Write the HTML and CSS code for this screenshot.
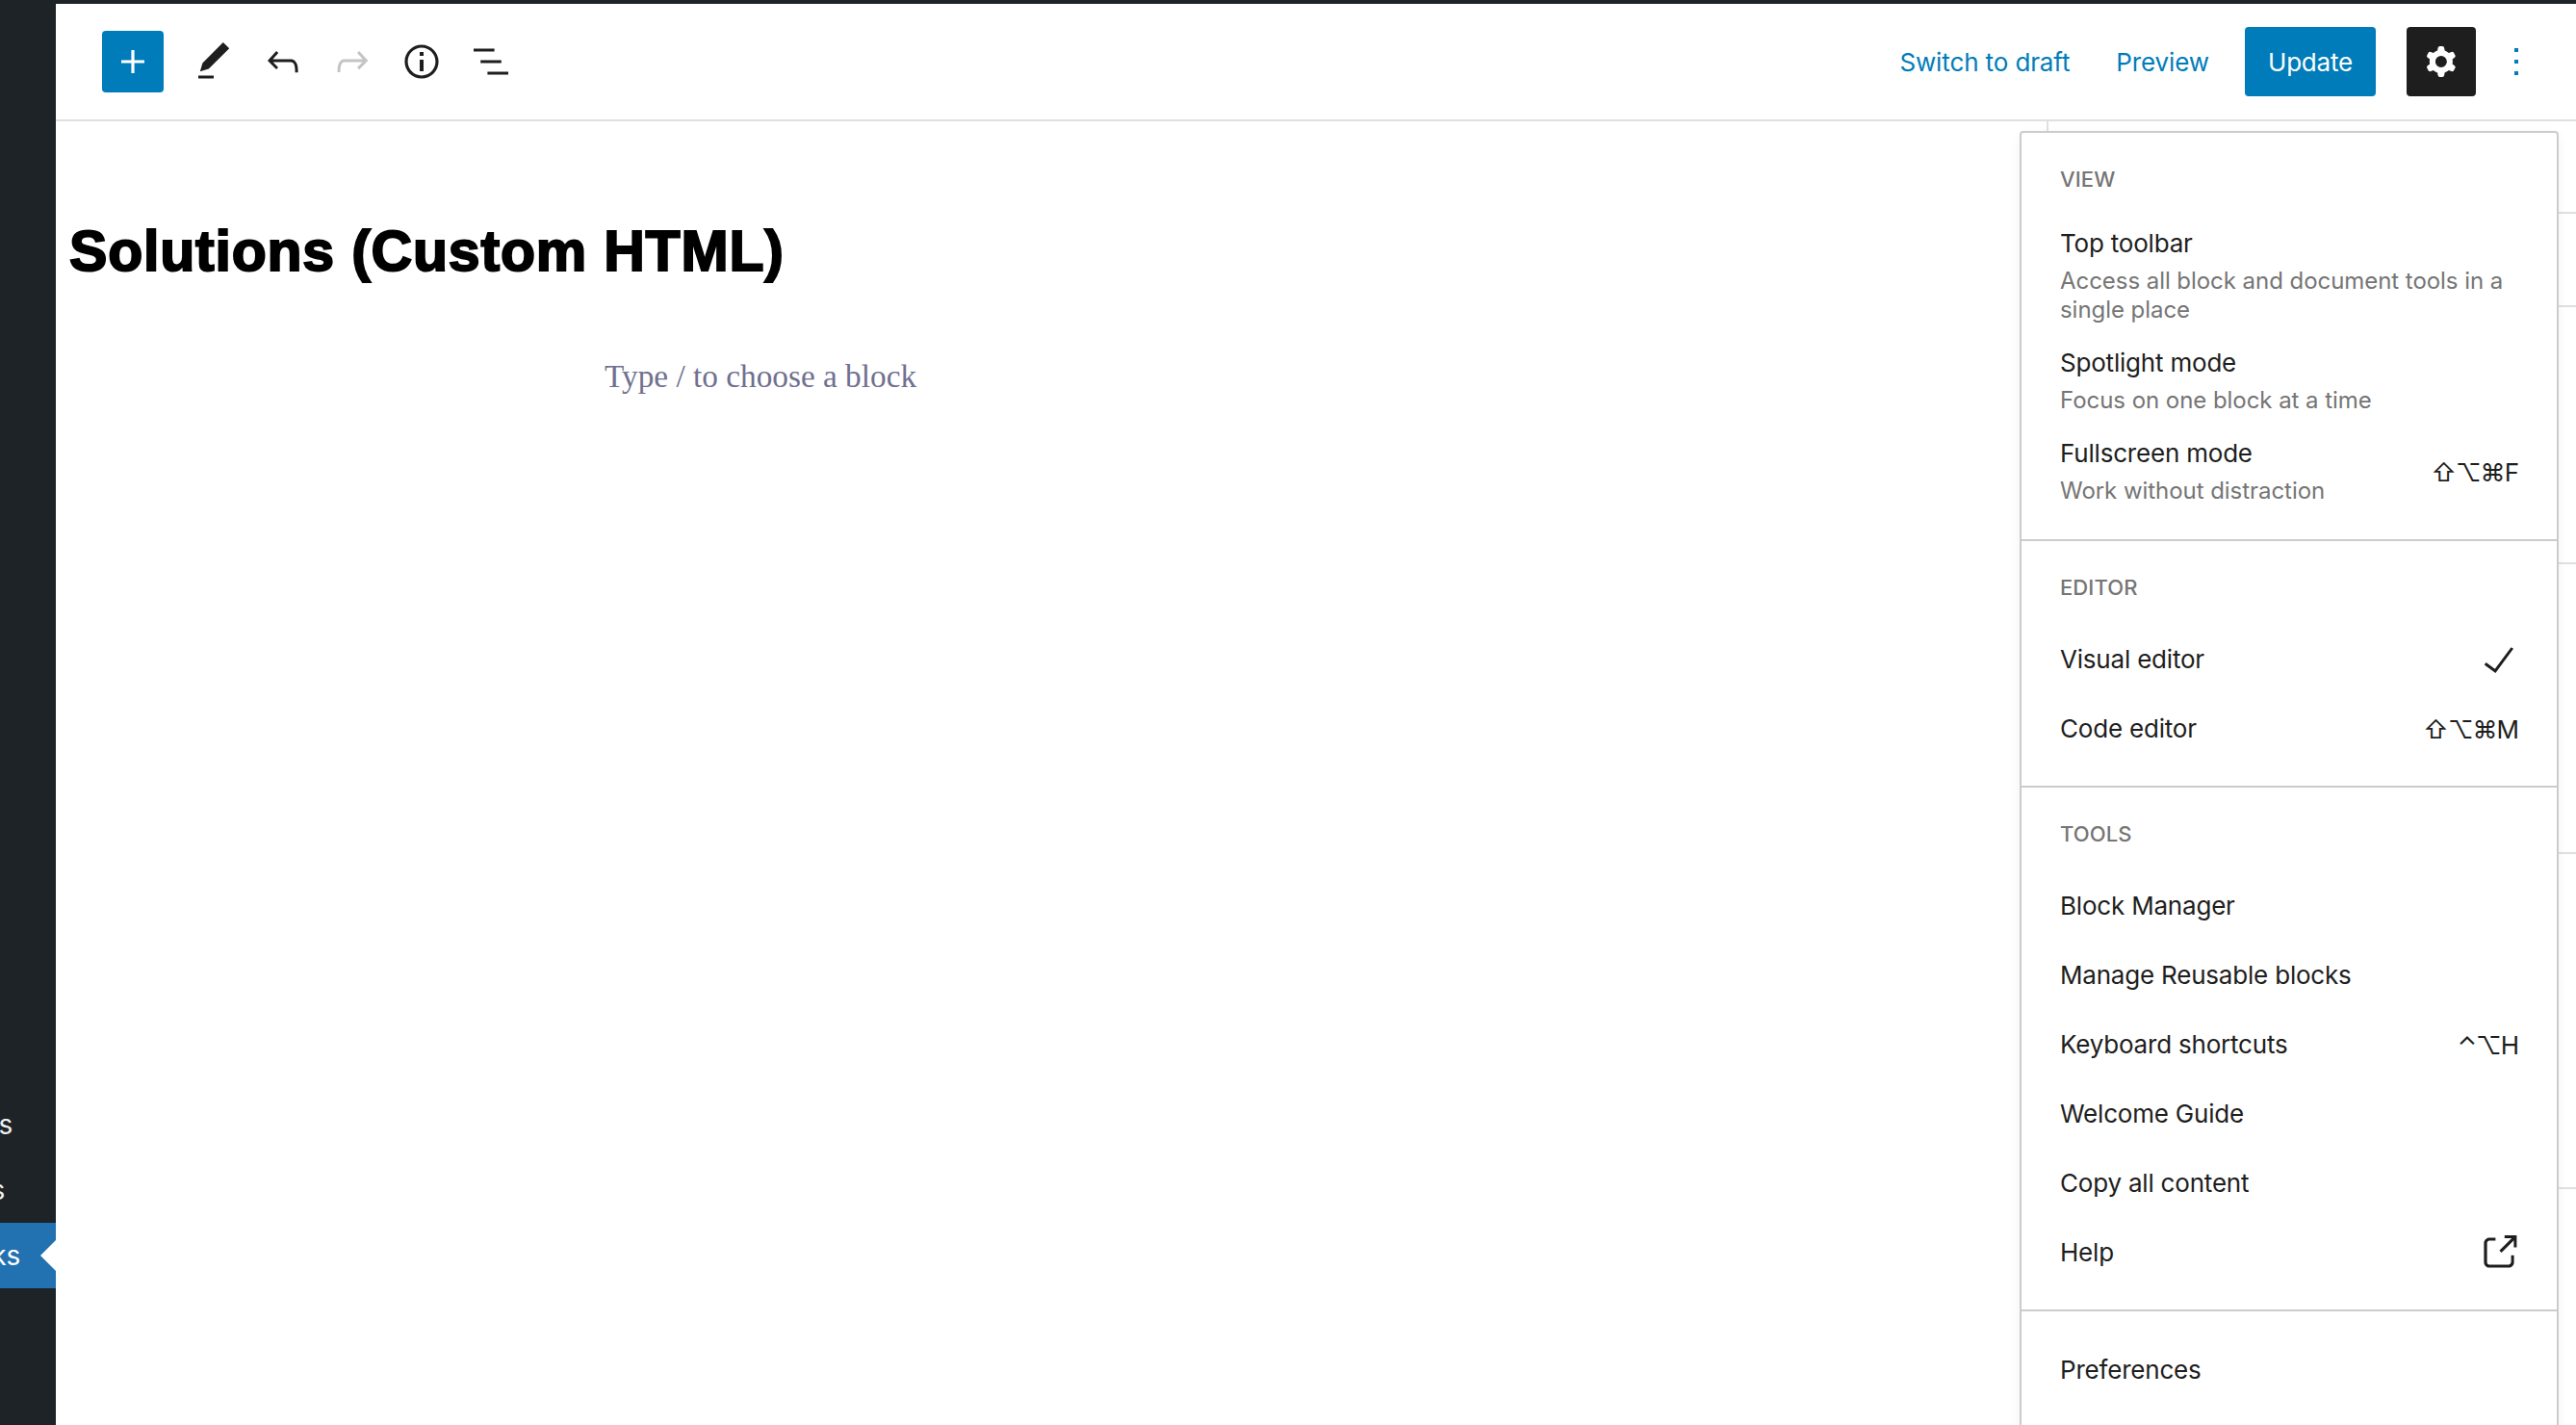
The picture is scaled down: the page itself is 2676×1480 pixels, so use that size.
FILE: index.html
```html
<!DOCTYPE html>
<html lang="en">
<head>
<meta charset="utf-8">
<title>Edit Block</title>
<link rel="stylesheet" href="styles.css">
</head>
<body>
<div class="app">
  <nav class="admin-menu">
    <div class="admin-item admin-item-a"><span>s</span></div>
    <div class="admin-item admin-item-b"><span>s</span></div>
    <div class="admin-item admin-item-current"><span>ks</span></div>
  </nav>
  <div class="editor">
    <header class="toolbar">
      <div class="tools">
        <button class="add-btn" type="button"><svg class="icon" viewBox="0 0 24 24"><path d="M18 11.2h-5.2V6h-1.6v5.2H6v1.6h5.2V18h1.6v-5.2H18z"/></svg></button>
        <button class="tool-btn" type="button"><svg class="icon" viewBox="0 0 24 24"><path d="M20.1 5.1L16.9 2 6.2 12.7l-1.3 4.4 4.5-1.3L20.1 5.1zM4 20.8h8v-1.5H4v1.5z"/></svg></button>
        <button class="tool-btn" type="button"><svg class="icon" viewBox="0 0 24 24"><path d="M18.3 11.7c-.6-.6-1.4-.9-2.3-.9H6.7l2.9-3.3-1.1-1-4.5 5L8.5 16l1-1-2.7-2.7H16c.5 0 .9.2 1.3.5 1 1 1 3.4 1 4.5v.3h1.5v-.2c0-1.5 0-4.3-1.5-5.7z"/></svg></button>
        <button class="tool-btn tool-disabled" type="button"><svg class="icon" viewBox="0 0 24 24"><path d="M15.6 6.5l-1.1 1 2.9 3.3H8c-.9 0-1.7.3-2.3.9-1.4 1.5-1.4 4.2-1.4 5.6v.2h1.5v-.3c0-1.1 0-3.5 1-4.5.3-.3.7-.5 1.3-.5h9.2L14.5 15l1.1 1.1 4.6-4.6-4.6-5z"/></svg></button>
        <button class="tool-btn" type="button"><svg class="icon" viewBox="0 0 24 24"><path d="M12 3.2c-4.8 0-8.8 3.9-8.8 8.8 0 4.8 3.9 8.8 8.8 8.8 4.8 0 8.8-3.9 8.8-8.8 0-4.8-4-8.8-8.8-8.8zm0 16c-4 0-7.2-3.3-7.2-7.2C4.8 8 8 4.8 12 4.8s7.2 3.3 7.2 7.2c0 4-3.2 7.2-7.2 7.2zM11 17h2v-6h-2v6zm0-8h2V7h-2v2z"/></svg></button>
        <button class="tool-btn" type="button"><svg class="icon" viewBox="0 0 24 24"><path d="M13.8 5.2H3v1.5h10.8V5.2zm-3.6 12v1.5H21v-1.5H10.2zm7.2-6H6.6v1.5h10.8v-1.5z"/></svg></button>
      </div>
      <div class="actions">
        <a class="link-btn link-draft">Switch to draft</a>
        <a class="link-btn link-preview">Preview</a>
        <button class="update-btn" type="button">Update</button>
        <button class="gear-btn" type="button"><svg class="icon" viewBox="0 0 24 24"><path fill-rule="evenodd" clip-rule="evenodd" d="M10.289 4.836A1 1 0 0111.275 4h1.306a1 1 0 01.987.836l.244 1.466c.787.26 1.503.679 2.108 1.218l1.393-.522a1 1 0 011.216.437l.653 1.13a1 1 0 01-.23 1.273l-1.148.944a6.025 6.025 0 010 2.435l1.149.946a1 1 0 01.23 1.272l-.653 1.13a1 1 0 01-1.216.437l-1.394-.522c-.605.54-1.32.958-2.108 1.218l-.244 1.466a1 1 0 01-.987.836h-1.306a1 1 0 01-.986-.836l-.244-1.466a5.995 5.995 0 01-2.108-1.218l-1.394.522a1 1 0 01-1.217-.436l-.653-1.131a1 1 0 01.23-1.272l1.149-.946a6.026 6.026 0 010-2.435l-1.148-.944a1 1 0 01-.23-1.272l.653-1.131a1 1 0 011.217-.437l1.393.522a5.994 5.994 0 012.108-1.218l.244-1.466zM14.929 12a3 3 0 11-6 0 3 3 0 016 0z"/></svg></button>
        <button class="more-btn" type="button"><svg class="icon" viewBox="0 0 24 24"><path d="M13 19h-2v-2h2v2zm0-6h-2v-2h2v2zm0-6h-2V5h2v2z"/></svg></button>
      </div>
    </header>
    <div class="workspace">
      <main class="canvas">
        <h1 class="post-title">Solutions (Custom HTML)</h1>
        <p class="placeholder">Type / to choose a block</p>
      </main>
      <aside class="side-panel">
        <div class="panel-sec panel-a"></div>
        <div class="panel-sec panel-b"></div>
        <div class="panel-sec panel-c"></div>
        <div class="panel-sec panel-d"></div>
        <div class="panel-sec panel-e"></div>
      </aside>
      <div class="menu">
        <section class="group">
          <h2 class="group-label">View</h2>
          <div class="item item-info"><div><div class="item-title">Top toolbar</div><div class="item-desc">Access all block and document tools in a single place</div></div></div>
          <div class="item item-info"><div><div class="item-title">Spotlight mode</div><div class="item-desc">Focus on one block at a time</div></div></div>
          <div class="item item-info"><div><div class="item-title">Fullscreen mode</div><div class="item-desc">Work without distraction</div></div><span class="shortcut">⇧⌥⌘F</span></div>
        </section>
        <section class="group">
          <h2 class="group-label">Editor</h2>
          <div class="item"><div class="item-title">Visual editor</div><svg class="icon item-icon" viewBox="0 0 24 24"><path d="M18.3 5.6L9.9 16.9l-4.6-3.4-.9 1.2 5.8 4.3 9.3-12.6z"/></svg></div>
          <div class="item"><div class="item-title">Code editor</div><span class="shortcut">⇧⌥⌘M</span></div>
        </section>
        <section class="group">
          <h2 class="group-label">Tools</h2>
          <div class="item"><div class="item-title">Block Manager</div></div>
          <div class="item"><div class="item-title">Manage Reusable blocks</div></div>
          <div class="item"><div class="item-title">Keyboard shortcuts</div><span class="shortcut">⌃⌥H</span></div>
          <div class="item"><div class="item-title">Welcome Guide</div></div>
          <div class="item"><div class="item-title">Copy all content</div></div>
          <div class="item"><div class="item-title">Help</div><svg class="icon item-icon" viewBox="0 0 24 24"><path d="M18.2 17c0 .7-.6 1.2-1.2 1.2H7c-.7 0-1.2-.6-1.2-1.2V7c0-.7.6-1.2 1.2-1.2h3.2V4.2H7C5.5 4.2 4.2 5.5 4.2 7v10c0 1.5 1.2 2.8 2.8 2.8h10c1.5 0 2.8-1.2 2.8-2.8v-3.6h-1.5V17zM14.9 3v1.5h3.7l-6.4 6.4 1.1 1.1 6.4-6.4v3.7h1.5V3h-6.3z"/></svg></div>
        </section>
        <section class="group group-plain">
          <div class="item"><div class="item-title">Preferences</div></div>
        </section>
      </div>
    </div>
  </div>
</div>
</body>
</html>
```
FILE: styles.css
```css
* { box-sizing: border-box; }
html, body { margin: 0; height: 100%; overflow: hidden; background: #fff; }
body { font-family: Inter, "Noto Sans", "DejaVu Sans", sans-serif; font-size: 26px; letter-spacing: -0.2px; color: #1e1e1e; }
button { border: 0; padding: 0; margin: 0; font: inherit; letter-spacing: inherit; background: none; display: flex; align-items: center; justify-content: center; }

.app { display: flex; height: 1480px; }

.admin-menu { width: 58px; flex: none; background: #1d2327; color: #f0f0f1; display: flex; flex-direction: column; padding-top: 1148px; overflow: hidden; }
.admin-item { display: flex; justify-content: flex-end; align-items: center; white-space: nowrap; font-size: 28px; line-height: 40px; height: 40px; }
.admin-item-a { padding-right: 45px; margin-bottom: 28px; }
.admin-item-b { padding-right: 53px; margin-bottom: 14px; }
.admin-item-current { position: relative; height: 68px; background: #2271b1; color: #fff; padding-right: 37px; }
.admin-item-current::after { content: ""; position: absolute; right: 0; top: 18px; border: 16px solid transparent; border-left: 0; border-right-color: #fff; }

.editor { flex: 1; min-width: 0; display: flex; flex-direction: column; border-top: 4px solid #1d2327; }

.toolbar { height: 122px; flex: none; border-bottom: 2px solid #e0e0e0; display: flex; justify-content: space-between; align-items: center; padding: 0 26px 0 48px; }
.tools, .actions { display: flex; align-items: center; }
.icon { width: 48px; height: 48px; display: block; fill: currentColor; flex: none; }
.add-btn { width: 64px; height: 64px; border-radius: 4px; background: #007cba; color: #fff; margin-right: 16px; }
.tool-btn { width: 72px; height: 72px; color: #1e1e1e; }
.tool-disabled { color: #c4c4c4; }
.link-btn { color: #007cba; line-height: 72px; padding-top: 2px; letter-spacing: -0.12px; }
.link-draft { margin-right: 48px; }
.link-preview { margin-right: 37px; }
.update-btn { width: 136px; height: 72px; padding-top: 1px; background: #007cba; color: #fff; border-radius: 4px; margin-right: 32px; }
.gear-btn { width: 72px; height: 72px; background: #1e1e1e; color: #fff; border-radius: 4px; margin-right: 6px; }
.more-btn { width: 72px; height: 72px; color: #007cba; }

.workspace { flex: 1; min-height: 0; display: flex; position: relative; }
.canvas { flex: 1; min-width: 0; padding: 98px 0 0 14px; }
.post-title { margin: 0; font-family: "Liberation Sans", Arial, sans-serif; font-weight: 700; font-size: 59px; line-height: 74px; letter-spacing: 0.8px; color: #000; -webkit-text-stroke: 2px #000; }
.placeholder { margin: 68px 0 0 556px; font-family: "Liberation Serif", "Times New Roman", serif; font-size: 33.3px; letter-spacing: 0; line-height: 50px; color: #70708f; }

.side-panel { width: 550px; flex: none; border-left: 2px solid #e0e0e0; display: flex; flex-direction: column; }
.panel-sec { border-bottom: 2px solid #e0e0e0; }
.panel-a { height: 96px; }
.panel-b { height: 97px; }
.panel-c { height: 267px; }
.panel-d { height: 301px; }
.panel-e { height: 348px; }

.menu { position: absolute; top: 10px; right: 18px; width: 560px; background: #fff; border: 2px solid #ccc; border-radius: 4px; box-shadow: 0 4px 12px rgba(0, 0, 0, .05); }
.group { padding: 32px 40px 23px; border-top: 2px solid #ccc; }
.group:first-child { border-top: 0; }
.group-plain { padding-top: 25px; }
.group-label { margin: 0 0 23px; font-size: 22px; font-weight: 500; line-height: 32px; letter-spacing: 0.1px; text-transform: uppercase; color: #757575; }
.item { min-height: 72px; display: flex; align-items: center; justify-content: space-between; }
.item-info { padding: 12px 0; }
.item-title { line-height: 32px; color: #1e1e1e; }
.item-desc { margin-top: 8px; font-size: 24px; letter-spacing: -0.05px; line-height: 30px; color: #757575; }
.shortcut { flex: none; color: #1e1e1e; letter-spacing: -1px; }
.item-icon { margin-right: -4px; }
```
